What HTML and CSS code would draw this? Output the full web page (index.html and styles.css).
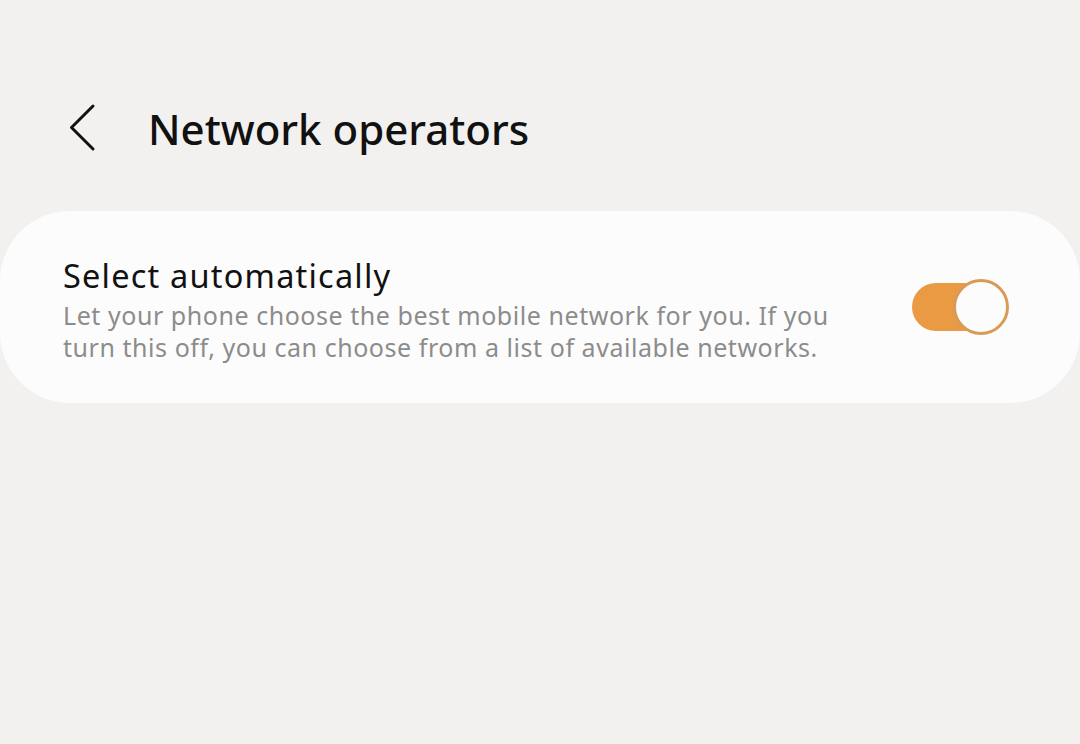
FILE: index.html
```html
<!DOCTYPE html>
<html>
<head>
<meta charset="utf-8">
<link rel="stylesheet" href="styles.css">
</head>
<body>
<div class="page">
  <header class="appbar">
    <div class="back">
      <svg width="30" height="50" viewBox="0 0 30 50"><path d="M26 3 L4.5 24.5 L26 46" fill="none" stroke="#111" stroke-width="3" stroke-linecap="round" stroke-linejoin="round"/></svg>
    </div>
    <h1 class="title">Network operators</h1>
  </header>
  <section class="card">
    <div class="text">
      <div class="label">Select automatically</div>
      <div class="desc">Let your phone choose the best mobile network for you. If you turn this off, you can choose from a list of available networks.</div>
    </div>
    <div class="switch"><div class="track"></div><div class="thumb"></div></div>
  </section>
</div>
</body>
</html>
```
FILE: styles.css
```css
html, body { margin: 0; padding: 0; }
body { background: #f2f1ef; font-family: "Noto Sans", "Open Sans", sans-serif; width: 1080px; height: 744px; overflow: hidden; }
.page { display: flex; flex-direction: column; }
.appbar { display: flex; align-items: center; height: 96px; margin-top: 80px; padding-left: 67px; }
.back { width: 30px; height: 50px; margin-right: 51px; display: flex; }
.title { margin: 0; font-size: 42px; font-weight: 500; color: #111; }
.card { margin-top: 35px; background: #fcfcfc; border-radius: 70px; height: 192px; display: flex; align-items: center; padding: 0 71px 0 63px; box-sizing: border-box; }
.text { flex: 1; padding-top: 4px; }
.label { font-size: 32.5px; color: #111; line-height: 40px; letter-spacing: 1.2px; }
.desc { font-size: 25px; color: #8c8c8c; line-height: 32px; width: 800px; margin-top: 3px; letter-spacing: 0.55px; }
.switch { width: 97px; height: 56px; position: relative; display: flex; align-items: center; }
.track { width: 78px; height: 48px; border-radius: 24px; background: #eb9a44; }
.thumb { position: absolute; right: 0; top: 0; width: 56px; height: 56px; box-sizing: border-box; border-radius: 50%; background: #fcfcfc; border: 3px solid #d99a55; }
```
